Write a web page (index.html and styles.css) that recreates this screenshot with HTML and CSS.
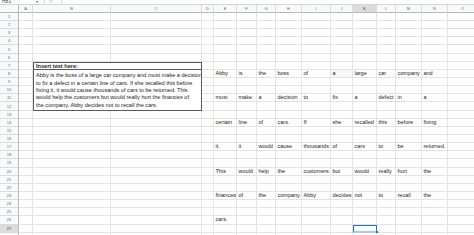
FILE: index.html
```html
<!DOCTYPE html>
<html lang="en">
<head>
  <meta charset="UTF-8">
  <meta name="viewport" content="width=device-width, initial-scale=1.0">
  <title>Sheet</title>
  <link rel="stylesheet" href="styles.css">
</head>
<body>
  <!-- formula bar (only its bottom edge is visible) -->
  <div class="formula-bar">
    <span class="name-box">H81</span>
    <span class="caret">▾</span>
    <span class="fx">fx</span>
  </div>

  <!-- sheet grid -->
  <div id="sheet" class="sheet">
    <div class="box-head">Insert text here:</div>
    <div class="box-body">
      Abby is the boss of a large car company and must make a decision<br>
      to fix a defect in a certain line of cars. If she recalled this before<br>
      fixing it, it would cause thousands of cars to be returned. This<br>
      would help the customers but would really hurt the finances of<br>
      the company. Abby decides not to recall the cars.
    </div>
    <div class="selected"><span class="handle"></span></div>
  </div>

  <script>
    // column letters (first entry is the row header column)
    const letters = ['', 'A', 'B', 'C', 'D', 'E', 'F', 'G', 'H', 'I', 'J', 'K', 'L', 'M', 'N', 'O'];
    const rowCount = 28;
    const selCol = 'K';
    const selRow = 27;

    // words spread over columns E..N
    const words = {
      8: ['Abby', 'is', 'the', 'boss', 'of', 'a', 'large', 'car', 'company', 'and'],
      11: ['must', 'make', 'a', 'decision', 'to', 'fix', 'a', 'defect', 'in', 'a'],
      14: ['certain', 'line', 'of', 'cars.', 'If', 'she', 'recalled', 'this', 'before', 'fixing'],
      17: ['it,', 'it', 'would', 'cause', 'thousands', 'of', 'cars', 'to', 'be', 'returned.'],
      20: ['This', 'would', 'help', 'the', 'customers', 'but', 'would', 'really', 'hurt', 'the'],
      23: ['finances', 'of', 'the', 'company.', 'Abby', 'decides', 'not', 'to', 'recall', 'the'],
      26: ['cars.']
    };

    const sheet = document.getElementById('sheet');
    const firstOverlay = sheet.firstElementChild;

    // every cell gets its own grid slot so the merged box can sit on top
    function addCell(cls, text, row, col) {
      const cell = document.createElement('div');
      cell.className = cls;
      cell.textContent = text;
      cell.style.gridArea = (row + 1) + ' / ' + (col + 1);
      sheet.insertBefore(cell, firstOverlay);
      return cell;
    }

    // header row
    letters.forEach((l, i) => {
      let cls = i === 0 ? 'corner' : 'col-head';
      if (l === selCol) cls += ' active';
      addCell(cls, l, 0, i);
    });

    // body rows
    for (let r = 1; r <= rowCount; r++) {
      addCell(r === selRow ? 'row-head active' : 'row-head', r, r, 0);
      const line = words[r] || [];
      for (let c = 1; c < letters.length; c++) {
        const w = c >= 5 ? (line[c - 5] || '') : '';
        let cls = 'cell';
        if (r === 8 && letters[c] === 'J') cls += ' shade';
        addCell(cls, w, r, c);
      }
    }
  </script>
</body>
</html>
```

FILE: styles.css
```css
/* page */
body {
  margin: 0;
  width: 474px;
  height: 235px;
  overflow: hidden;
  background: #fff;
  font-family: "Liberation Sans", Arial, sans-serif;
  color: #222;
}

/* formula bar */
.formula-bar {
  height: 5px;
  overflow: hidden;
  display: flex;
  align-items: flex-end;
  font-size: 5px;
  line-height: 5px;
  color: #444;
  border-bottom: 1px solid #d5d5d5;
  box-sizing: border-box;
}

.name-box {
  width: 34px;
  padding-left: 2px;
  margin-top: -2px;
}

.caret {
  width: 8px;
  font-size: 4px;
  color: #666;
  border-right: 1px solid #ddd;
}

.fx {
  width: 12px;
  padding-left: 4px;
  color: #bbb;
  border-right: 1px solid #ddd;
}

/* grid */
.sheet {
  display: grid;
  grid-template-columns: 19px 14px 78px 91px 12px 23px 20px 19px 26px 29px 22px 24px 19px 26px 26px 30px;
  grid-template-rows: 7.9px repeat(28, 8.15px);
}

.sheet > div {
  box-sizing: border-box;
  overflow: hidden;
  white-space: nowrap;
}

.corner,
.col-head,
.row-head {
  background: #f8f9fa;
  color: #5f6368;
  font-size: 4px;
  display: flex;
  align-items: center;
  justify-content: center;
}

.corner {
  border-right: 1px solid #b8b8b8;
  border-bottom: 1px solid #b8b8b8;
}

.col-head {
  border-right: 1px solid #dadada;
  border-bottom: 1px solid #b8b8b8;
}

.row-head {
  border-right: 1px solid #b8b8b8;
  border-bottom: 1px solid #dadada;
}

.active {
  background: #dcdcdc;
  color: #333;
}

.cell {
  border-right: 1px solid #e3e3e3;
  border-bottom: 1px solid #e3e3e3;
  font-size: 5.5px;
  line-height: 7px;
  padding: 0 0 0 1.5px;
  display: flex;
  align-items: center;
}

.shade {
  background: #f7f7f7;
}

/* merged text box over B7:C12 */
.sheet > .box-head {
  grid-column: 3 / 5;
  grid-row: 8 / 9;
  background: #fff;
  border: 1px solid #595959;
  font-size: 5.6px;
  font-weight: bold;
  padding-left: 2px;
  display: flex;
  align-items: center;
}

.sheet > .box-body {
  grid-column: 3 / 5;
  grid-row: 9 / 14;
  background: #fff;
  border: 1px solid #595959;
  border-top: none;
  font-size: 5.6px;
  line-height: 7.3px;
  padding: 2.5px 0 0 2px;
}

/* selected cell K27 */
.sheet > .selected {
  grid-column: 12 / 13;
  grid-row: 28 / 29;
  position: relative;
  overflow: visible;
  border: 1px solid #1a73e8;
  border-bottom: 2px solid #a8c7fa;
}

.handle {
  position: absolute;
  right: -2px;
  bottom: -2px;
  width: 2px;
  height: 2px;
  background: #1a73e8;
}
```
